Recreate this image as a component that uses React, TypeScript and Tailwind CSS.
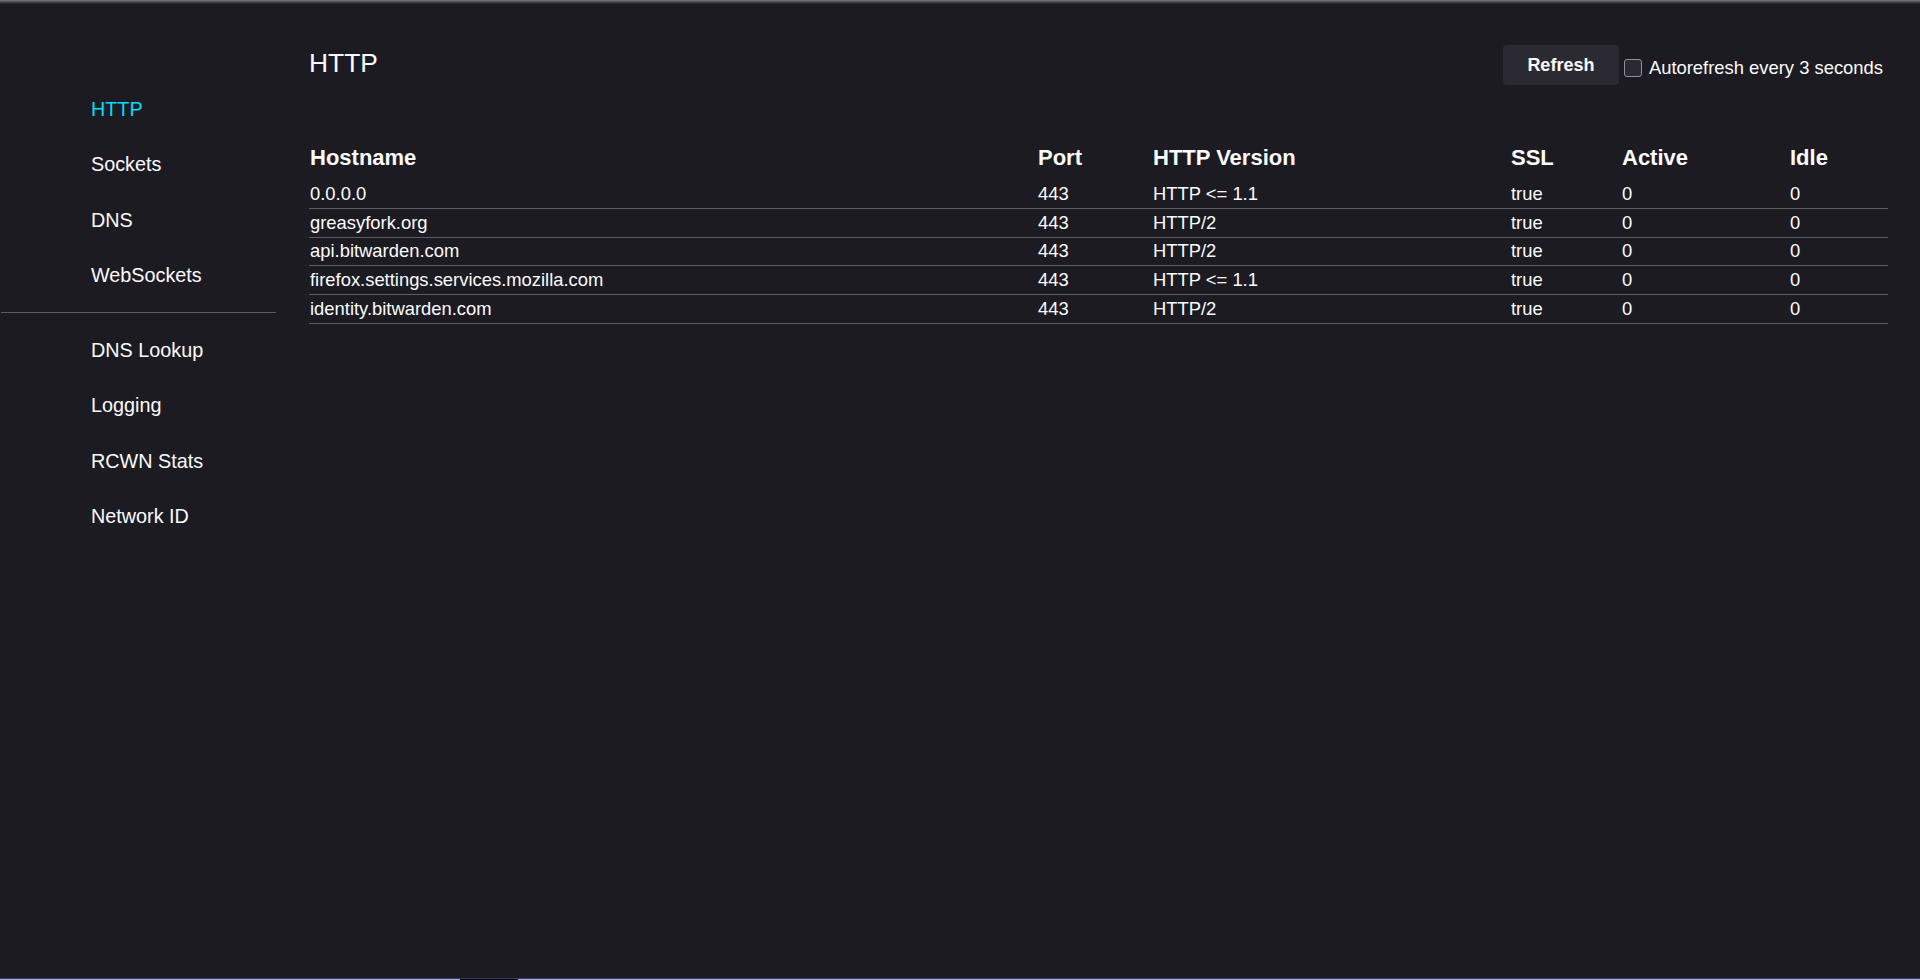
import React from "react";

const categories = ["HTTP", "Sockets", "DNS", "WebSockets"];
const tools = ["DNS Lookup", "Logging", "RCWN Stats", "Network ID"];

const rows = [
  { host: "0.0.0.0", port: 443, version: "HTTP <= 1.1", ssl: "true", active: 0, idle: 0 },
  { host: "greasyfork.org", port: 443, version: "HTTP/2", ssl: "true", active: 0, idle: 0 },
  { host: "api.bitwarden.com", port: 443, version: "HTTP/2", ssl: "true", active: 0, idle: 0 },
  { host: "firefox.settings.services.mozilla.com", port: 443, version: "HTTP <= 1.1", ssl: "true", active: 0, idle: 0 },
  { host: "identity.bitwarden.com", port: 443, version: "HTTP/2", ssl: "true", active: 0, idle: 0 },
];

function NavItem({ label, selected }: { label: string; selected?: boolean }) {
  return (
    <div
      className={`pl-[91px] py-[16px] text-[19.8px] leading-[23.3px] cursor-pointer ${
        selected ? "text-[#00ddff]" : "text-[#fbfbfe]"
      }`}
    >
      {label}
    </div>
  );
}

export default function App() {
  return (
    <div
      className="relative h-[980px] w-full overflow-hidden bg-[#1c1b22] text-[#fbfbfe] flex"
      style={{ fontFamily: '"Liberation Sans", Arial, sans-serif' }}
    >
      {/* window top shadow */}
      <div className="absolute top-0 left-0 right-0 h-[4px] bg-gradient-to-b from-[#7c7c80] to-[#1c1b22]" />

      {/* Sidebar */}
      <aside className="w-[276px] shrink-0 pt-[82px]">
        {categories.map((c) => (
          <NavItem key={c} label={c} selected={c === "HTTP"} />
        ))}
        <div className="h-px bg-[#5b5b66] ml-px mt-[9px] mb-[10px]" />
        {tools.map((t) => (
          <NavItem key={t} label={t} />
        ))}
      </aside>

      {/* Main content */}
      <main className="flex-1 pl-[33px] pr-[32px] pt-[45px]">
        <div className="flex justify-between items-start">
          <h1 className="mt-[3px] text-[26.4px] leading-[30.4px] font-normal">HTTP</h1>
          <div className="flex items-center">
            <button className="w-[116px] h-[40px] rounded-[4px] bg-[#2b2a33] text-[18px] font-bold text-[#fbfbfe]">
              Refresh
            </button>
            <label className="flex items-center mt-[5px] ml-[5px] pr-[5px]">
              <span className="w-[18px] h-[18px] rounded-[3px] border border-[#8f8f9d] bg-[#2b2a33]" />
              <span className="ml-[7px] text-[18.4px] leading-[21px]">Autorefresh every 3 seconds</span>
            </label>
          </div>
        </div>

        <table className="mt-[55px] w-full table-fixed border-collapse">
          <colgroup>
            <col className="w-[728px]" />
            <col className="w-[115px]" />
            <col className="w-[358px]" />
            <col className="w-[111px]" />
            <col className="w-[168px]" />
            <col className="w-[99px]" />
          </colgroup>
          <thead>
            <tr>
              {["Hostname", "Port", "HTTP Version", "SSL", "Active", "Idle"].map((h) => (
                <th
                  key={h}
                  className="text-left pl-px pt-[5px] pb-[10px] text-[22px] leading-[25.3px] font-bold"
                >
                  {h}
                </th>
              ))}
            </tr>
          </thead>
          <tbody>
            {rows.map((r) => (
              <tr key={r.host} className="border-b border-[#5b5b66]">
                <td className="pl-px py-[3.5px] text-[18.4px] leading-[20.7px]">{r.host}</td>
                <td className="pl-px py-[3.5px] text-[18.4px] leading-[20.7px]">{r.port}</td>
                <td className="pl-px py-[3.5px] text-[18.4px] leading-[20.7px]">{r.version}</td>
                <td className="pl-px py-[3.5px] text-[18.4px] leading-[20.7px]">{r.ssl}</td>
                <td className="pl-px py-[3.5px] text-[18.4px] leading-[20.7px]">{r.active}</td>
                <td className="pl-px py-[3.5px] text-[18.4px] leading-[20.7px]">{r.idle}</td>
              </tr>
            ))}
          </tbody>
        </table>
      </main>

      {/* taskbar edge */}
      <div className="absolute bottom-0 left-0 right-0 h-[2px] flex flex-col">
        <div className="h-px bg-[#3a3a66]" />
        <div className="h-px bg-[#a9a8e6] flex">
          <div className="ml-[460px] w-[58px] h-px bg-black" />
        </div>
      </div>
    </div>
  );
}
